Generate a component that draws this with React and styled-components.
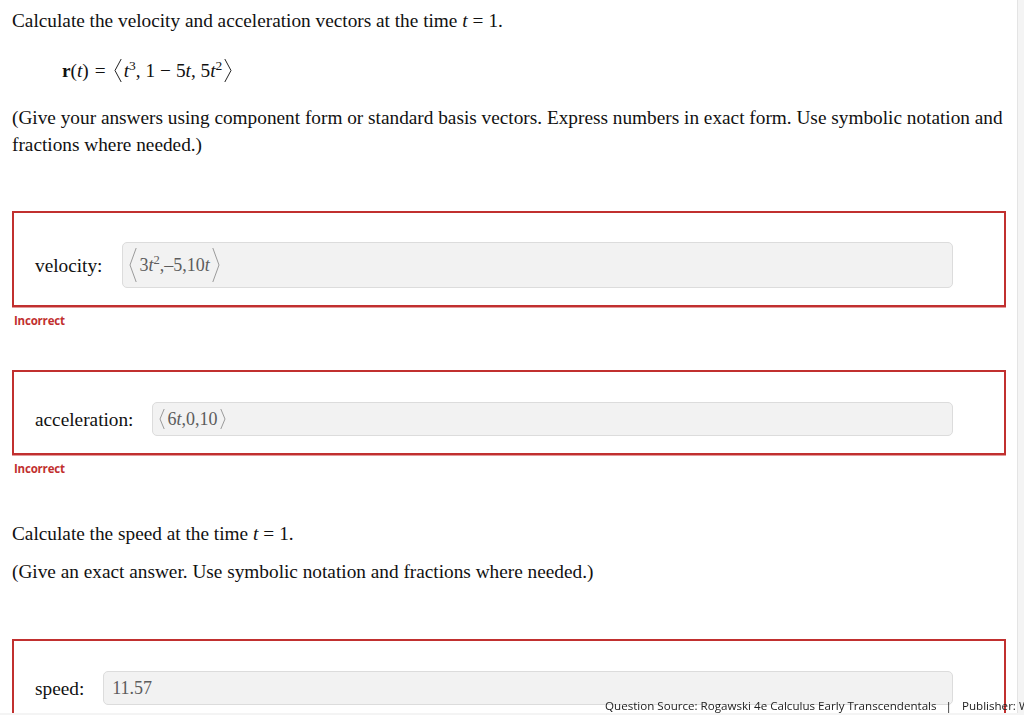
import React from 'react'
import styled, { createGlobalStyle } from 'styled-components'

const GlobalStyle = createGlobalStyle`
    html, body {
        margin: 0;
        padding: 0;
        background: #ffffff;
        overflow: hidden;
    }
`

const Page = styled.div`
    display: flex;
    width: 1024px;
    height: 715px;
    overflow: hidden;
`

const Main = styled.div`
    flex: 1;
    padding: 7px 11px 0 12px;
    font-family: "Liberation Serif", "Times New Roman", serif;
    font-size: 19.3px;
    line-height: 27px;
    color: #111;
`

const ScrollTrack = styled.div`
    width: 6px;
    height: 100%;
    background: #f4f4f4;
    border-left: 1px solid #e4e4e4;
`

const Text = styled.p`
    margin: ${props => props.top || "0"} 0 ${props => props.gap || "0"};
`

const Formula = styled.div`
    padding-left: 50px;
    margin: 23px 0 20px;
    display: flex;
    align-items: center;
    gap: 2px;
`

const Bold = styled.b``
const It = styled.i``

const Op = styled.span`
    margin: 0 ${props => props.space || "5px"};
`

const Sup = styled.sup`
    font-size: 0.7em;
    line-height: 0;
`

const BracketSvg = styled.svg`
    flex-shrink: 0;
    margin: ${props => props.side === "left" ? "0 2px 0 0" : "0 0 0 2px"};
`

// thin stretched angle bracket, as the math renderer draws it
const AngleBracket = ({ side, height, width, color, weight }) => {
    const w = width || 7
    const h = height || 24
    const d = side === "left"
        ? `M${w - 0.8} 1 L1 ${h / 2} L${w - 0.8} ${h - 1}`
        : `M0.8 1 L${w - 1} ${h / 2} L0.8 ${h - 1}`
    return (
        <BracketSvg side={side} width={w} height={h} viewBox={`0 0 ${w} ${h}`}>
            <path d={d} fill="none" stroke={color || "#222"} strokeWidth={weight || 1} />
        </BracketSvg>
    )
}

const Inline = styled.span`
    display: inline-flex;
    align-items: center;
`

const AnswerBox = styled.div`
    border: 2px solid #c1302f;
    box-shadow: 0 1px 0 #e39a9a;
    padding: ${props => props.padTop || "29px"} 51px 17px 21px;
    display: flex;
    align-items: center;
    gap: ${props => props.gap || "19px"};
    margin-top: ${props => props.top || "0"};
`

const Label = styled.span`
    color: #111;
`

const Input = styled.div`
    flex: 1;
    height: ${props => props.height || "34px"};
    box-sizing: border-box;
    background: #f2f2f2;
    border: 1px solid #dcdcdc;
    border-radius: 5px;
    padding: 0 ${props => props.padLeft || "6px"};
    display: flex;
    align-items: center;
    font-size: 18px;
    color: #5c5c5c;
`

const Status = styled.div`
    font-family: "Open Sans", "Liberation Sans", sans-serif;
    font-weight: 700;
    font-size: 11.5px;
    line-height: 16px;
    color: #c1302f;
    margin: 6px 0 0 2px;
    letter-spacing: -0.2px;
`

const Footer = styled.div`
    position: fixed;
    left: 605px;
    right: 0;
    bottom: 2px;
    white-space: nowrap;
    overflow: hidden;
    font-family: "Open Sans", "Liberation Sans", sans-serif;
    font-size: 11.6px;
    line-height: 14px;
    color: #222;
`

const Divider = styled.span`
    margin: 0 10px 0 9px;
`

const BottomStrip = styled.div`
    position: fixed;
    left: 0;
    right: 0;
    bottom: 0;
    height: 2px;
    background: #f4f4f4;
`

const App = () => {
    return (
        <Page>
            <GlobalStyle />
            <Main>
                <Text>Calculate the velocity and acceleration vectors at the time <It>t</It><Op>=</Op>1.</Text>
                <Formula>
                    <span><Bold>r</Bold>(<It>t</It>)<Op space="6px">=</Op></span>
                    <Inline>
                        <AngleBracket side="left" height={25} width={8} />
                        <span><It>t</It><Sup>3</Sup>, 1<Op>−</Op>5<It>t</It>, 5<It>t</It><Sup>2</Sup></span>
                        <AngleBracket side="right" height={25} width={8} />
                    </Inline>
                </Formula>
                <Text gap="53px">(Give your answers using component form or standard basis vectors. Express numbers in exact form. Use symbolic notation and fractions where needed.)</Text>

                <AnswerBox gap="20px">
                    <Label>velocity:</Label>
                    <Input height="46px">
                        <AngleBracket side="left" height={36} width={8} color="#9a9a9a" />
                        <span>3<It>t</It><Sup>2</Sup>,–5,10<It>t</It></span>
                        <AngleBracket side="right" height={36} width={8} color="#9a9a9a" />
                    </Input>
                </AnswerBox>
                <Status>Incorrect</Status>

                <AnswerBox top="41px" padTop="30px">
                    <Label>acceleration:</Label>
                    <Input>
                        <AngleBracket side="left" height={22} width={6} color="#9a9a9a" />
                        <span>6<It>t</It>,0,10</span>
                        <AngleBracket side="right" height={22} width={6} color="#9a9a9a" />
                    </Input>
                </AnswerBox>
                <Status>Incorrect</Status>

                <Text top="43px" gap="11px">Calculate the speed at the time <It>t</It><Op>=</Op>1.</Text>
                <Text gap="54px">(Give an exact answer. Use symbolic notation and fractions where needed.)</Text>

                <AnswerBox padTop="30px">
                    <Label>speed:</Label>
                    <Input padLeft="8px">11.57</Input>
                </AnswerBox>
            </Main>
            <ScrollTrack />
            <Footer>
                Question Source: Rogawski 4e Calculus Early Transcendentals<Divider>|</Divider>Publisher: W. H. Freeman
            </Footer>
            <BottomStrip />
        </Page>
    )
}

export default App
